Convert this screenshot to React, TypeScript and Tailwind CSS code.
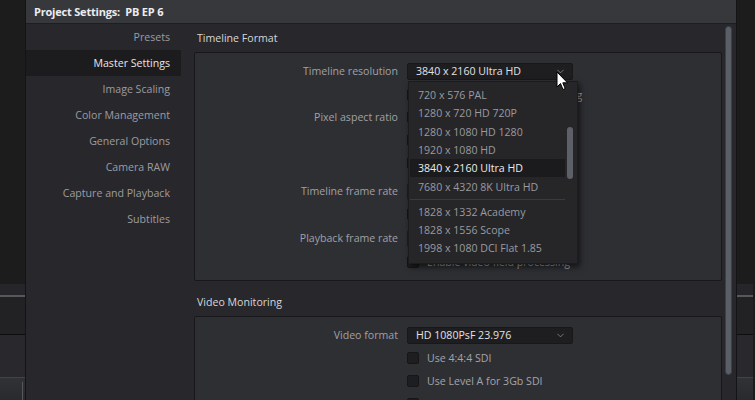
import { ChevronDown } from "lucide-react";

const NAV = [
  "Presets",
  "Master Settings",
  "Image Scaling",
  "Color Management",
  "General Options",
  "Camera RAW",
  "Capture and Playback",
  "Subtitles",
];

const RESOLUTIONS = [
  "720 x 576 PAL",
  "1280 x 720 HD 720P",
  "1280 x 1080 HD 1280",
  "1920 x 1080 HD",
  "3840 x 2160 Ultra HD",
  "7680 x 4320 8K Ultra HD",
];

const FILM_RESOLUTIONS = ["1828 x 1332 Academy", "1828 x 1556 Scope", "1998 x 1080 DCI Flat 1.85"];

// strips of the app that peeks out behind the settings window
function Backdrop({ width, rail }: { width: string; rail?: boolean }) {
  return (
    <div className={`flex shrink-0 flex-col ${width}`}>
      <div className="h-[284px] bg-[#1c1c1c]" />
      <div className="h-[11px] bg-[#26262a]" />
      <div className="h-[2px] bg-[#58585c]" />
      <div className="h-[37px] bg-[#222225]" />
      <div className="h-[1px] bg-[#0e0e0f]" />
      <div className="h-[42px] bg-[#29292d]" />
      <div className="h-[1px] bg-[#7a2c2c]" />
      <div className="flex flex-1 justify-end bg-gradient-to-b from-[#303235] to-[#282a2d] pt-[4px] pr-[2px]">
        {rail && <div className="w-[1px] bg-[#55575b]" />}
      </div>
    </div>
  );
}

function Select({ value }: { value: string }) {
  return (
    <div className="flex h-[17px] w-[166px] items-center justify-between rounded-[2px] border border-[#18181a] bg-[#1e1e21] pl-[8px] pr-[6px] text-[10.6px] text-[#e2e2e4]">
      <span className="pt-[1px]">{value}</span>
      <ChevronDown size={11} strokeWidth={1.5} className="text-[#9a9aa0]" />
    </div>
  );
}

function Checkbox({ label }: { label?: string }) {
  return (
    <div className="flex items-center gap-[8px]">
      <div className="h-[12px] w-[12px] rounded-[2px] border border-[#161618] bg-[#1e1e21]" />
      {label && <span className="pt-[1px] text-[10.6px] text-[#a4a4aa]">{label}</span>}
    </div>
  );
}

function Row({ label, mt, children }: { label?: string; mt: string; children?: React.ReactNode }) {
  return (
    <div className={`flex h-[20px] items-center ${mt}`}>
      <div className="w-[203px] shrink-0 pt-[2px] text-right text-[10.6px] text-[#a0a0a6]">{label}</div>
      <div className="relative ml-[9px] flex items-center">{children}</div>
    </div>
  );
}

function ResolutionMenu() {
  return (
    <div className="absolute left-[1px] top-[18px] z-10 h-[183px] w-[170px] border border-[#1c1c1f] bg-[#262629] pt-[4px] shadow-[2px_3px_6px_rgba(0,0,0,0.6)]">
      {RESOLUTIONS.map((r) => {
        const on = r === "3840 x 2160 Ultra HD";
        return (
          <div
            key={r}
            className={`ml-[1px] flex h-[18.4px] w-[155px] items-center pl-[8px] pt-[2px] text-[10.6px] ${on ? "bg-[#1b1b1e] text-[#ececee]" : "text-[#9a9aa0]"}`}
          >
            {r}
          </div>
        );
      })}
      <div className="ml-[1px] mt-[3px] mb-[2.5px] h-[1px] w-[155px] bg-[#3a3a3f]" />
      {FILM_RESOLUTIONS.map((r) => (
        <div key={r} className="ml-[1px] flex h-[18.4px] w-[155px] items-center pl-[8px] pt-[2px] text-[10.6px] text-[#9a9aa0]">
          {r}
        </div>
      ))}
      <div className="absolute left-[158px] top-[45px] h-[52px] w-[6px] rounded-full bg-[#5d6067]" />
    </div>
  );
}

function Cursor() {
  return (
    <svg className="absolute left-[149px] top-[8px] z-20" width="13" height="20" viewBox="0 0 13 20">
      <path d="M1 1 L1 16 L4.5 12.5 L7 18.5 L9.2 17.6 L6.8 11.8 L11.5 11.8 Z" fill="#fff" stroke="#000" strokeWidth="1" strokeLinejoin="round" />
    </svg>
  );
}

export default function App() {
  return (
    <div className="flex h-[400px] w-[755px] overflow-hidden bg-[#1c1c1c] font-['Open_Sans',sans-serif]">
      <Backdrop width="w-[25px]" rail />

      <div className="flex w-[712px] shrink-0 flex-col border-l border-r border-[#141416] bg-[#28282c]">
        {/* title bar */}
        <div className="flex h-[24px] shrink-0 items-center border-b border-[#1e1e20] bg-[#37383c] pl-[8px] pt-[1px] text-[11px] font-bold tracking-[-0.2px] text-[#ececee]">
          Project Settings:&nbsp; PB EP 6
        </div>

        <div className="flex flex-1">
          {/* sidebar */}
          <div className="flex w-[168px] shrink-0 flex-col">
            {NAV.map((n) => {
              const on = n === "Master Settings";
              return (
                <div
                  key={n}
                  className={`flex h-[26px] w-[155px] items-center justify-end pr-[11px] pt-[2px] text-[10.6px] ${on ? "bg-[#1c1c1f] text-[#e6e6e8]" : "text-[#9c9ca2]"}`}
                >
                  {n}
                </div>
              );
            })}
          </div>

          {/* settings */}
          <div className="flex w-[529px] shrink-0 flex-col">
            <div className="flex h-[28px] items-center pl-[3px] pt-[2px] text-[10.6px] text-[#d6d6d8]">Timeline Format</div>
            <div className="mr-[1px] rounded-[2px] border border-[#18181a] bg-[#2e2f33] pt-[8px] pb-[8px]">
              <Row label="Timeline resolution" mt="mt-0">
                <Select value="3840 x 2160 Ultra HD" />
                <ResolutionMenu />
                <Cursor />
              </Row>
              <Row mt="mt-[4px]">
                <Checkbox label="Use 3840 x 2160 HD processing" />
              </Row>
              <Row label="Pixel aspect ratio" mt="mt-[2px]">
                <Checkbox />
              </Row>
              <Row mt="mt-[3px]">
                <Checkbox />
              </Row>
              <Row mt="mt-[3px]">
                <Checkbox />
              </Row>
              <Row label="Timeline frame rate" mt="mt-[8px]">
                <div className="h-[17px] w-[166px] rounded-[2px] bg-[#1e1e21]" />
              </Row>
              <Row mt="mt-[3px]">
                <Checkbox />
              </Row>
              <Row label="Playback frame rate" mt="mt-[4px]">
                <div className="h-[17px] w-[166px] rounded-[2px] bg-[#1e1e21]" />
              </Row>
              <Row mt="mt-[4px]">
                <Checkbox label="Enable video field processing" />
              </Row>
            </div>

            <div className="mt-[7px] flex h-[28px] items-center pl-[3px] pt-[2px] text-[10.6px] text-[#d6d6d8]">Video Monitoring</div>
            <div className="mr-[1px] flex-1 rounded-t-[2px] border border-b-0 border-[#18181a] bg-[#2e2f33] pt-[8px]">
              <Row label="Video format" mt="mt-0">
                <Select value="HD 1080PsF 23.976" />
              </Row>
              <Row mt="mt-[3px]">
                <Checkbox label="Use 4:4:4 SDI" />
              </Row>
              <Row mt="mt-[3px]">
                <Checkbox label="Use Level A for 3Gb SDI" />
              </Row>
              <Row mt="mt-[3px]">
                <Checkbox />
              </Row>
            </div>
          </div>

          {/* page scrollbar */}
          <div className="flex w-[13px] shrink-0 flex-col pl-[2px] pt-[2px]">
            <div className="h-[349px] w-[7px] rounded-full border border-[#3e4046] bg-[#5a5e66]" />
          </div>
        </div>
      </div>

      <Backdrop width="w-[16px]" />
    </div>
  );
}
